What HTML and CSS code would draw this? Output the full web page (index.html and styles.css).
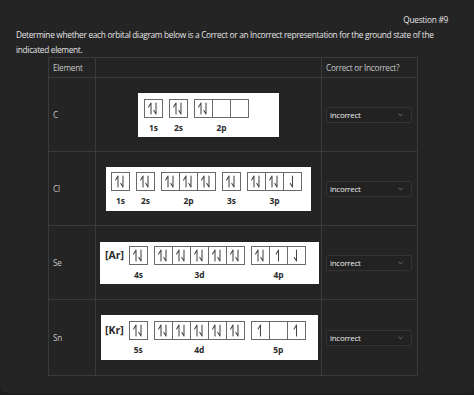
FILE: index.html
```html
<!DOCTYPE html>
<html lang="en">
<head>
<meta charset="utf-8">
<title>Question #9</title>
<link rel="stylesheet" href="styles.css">
</head>
<body>
<svg class="defs" width="0" height="0" aria-hidden="true">
  <defs>
    <symbol id="ud" viewBox="0 0 17 17"><path d="M6 14V3M6 3L3.6 7M11 3V14M11 14L8.8 10.4"/></symbol>
    <symbol id="u" viewBox="0 0 17 17"><path d="M8.5 14V3M8.5 3L6.1 7"/></symbol>
    <symbol id="d" viewBox="0 0 17 17"><path d="M8.5 3V14M8.5 14L6.3 10.4"/></symbol>
  </defs>
</svg>
<div class="page">
  <div class="qnum">Question #9</div>
  <p class="prompt">Determine whether each orbital diagram below is a Correct or an Incorrect representation for the ground state of the indicated element.</p>
  <table class="grid">
    <thead>
      <tr><th class="c-el">Element</th><th class="c-dg"></th><th class="c-ans">Correct or Incorrect?</th></tr>
    </thead>
    <tbody>
      <tr>
        <td class="c-el">C</td>
        <td class="c-dg">
          <div class="diagram d-c">
            <div class="grp"><div class="boxes"><span class="bx"><svg><use href="#ud"/></svg></span></div><div class="lbl">1s</div></div>
            <div class="grp"><div class="boxes"><span class="bx"><svg><use href="#ud"/></svg></span></div><div class="lbl">2s</div></div>
            <div class="grp"><div class="boxes"><span class="bx"><svg><use href="#ud"/></svg></span><span class="bx"></span><span class="bx"></span></div><div class="lbl">2p</div></div>
          </div>
        </td>
        <td class="c-ans"><div class="select"><span>incorrect</span><svg class="chev" viewBox="0 0 6 4"><path d="M0.5 0.5L3 3L5.5 0.5"/></svg></div></td>
      </tr>
      <tr>
        <td class="c-el">Cl</td>
        <td class="c-dg">
          <div class="diagram d-cl">
            <div class="grp"><div class="boxes"><span class="bx"><svg><use href="#ud"/></svg></span></div><div class="lbl">1s</div></div>
            <div class="grp"><div class="boxes"><span class="bx"><svg><use href="#ud"/></svg></span></div><div class="lbl">2s</div></div>
            <div class="grp"><div class="boxes"><span class="bx"><svg><use href="#ud"/></svg></span><span class="bx"><svg><use href="#ud"/></svg></span><span class="bx"><svg><use href="#ud"/></svg></span></div><div class="lbl">2p</div></div>
            <div class="grp"><div class="boxes"><span class="bx"><svg><use href="#ud"/></svg></span></div><div class="lbl">3s</div></div>
            <div class="grp"><div class="boxes"><span class="bx"><svg><use href="#ud"/></svg></span><span class="bx"><svg><use href="#ud"/></svg></span><span class="bx"><svg><use href="#d"/></svg></span></div><div class="lbl">3p</div></div>
          </div>
        </td>
        <td class="c-ans"><div class="select"><span>incorrect</span><svg class="chev" viewBox="0 0 6 4"><path d="M0.5 0.5L3 3L5.5 0.5"/></svg></div></td>
      </tr>
      <tr>
        <td class="c-el">Se</td>
        <td class="c-dg">
          <div class="diagram d-se">
            <div class="core">[Ar]</div>
            <div class="grp"><div class="boxes"><span class="bx"><svg><use href="#ud"/></svg></span></div><div class="lbl">4s</div></div>
            <div class="grp"><div class="boxes"><span class="bx"><svg><use href="#ud"/></svg></span><span class="bx"><svg><use href="#ud"/></svg></span><span class="bx"><svg><use href="#ud"/></svg></span><span class="bx"><svg><use href="#ud"/></svg></span><span class="bx"><svg><use href="#ud"/></svg></span></div><div class="lbl">3d</div></div>
            <div class="grp"><div class="boxes"><span class="bx"><svg><use href="#ud"/></svg></span><span class="bx"><svg><use href="#u"/></svg></span><span class="bx"><svg><use href="#d"/></svg></span></div><div class="lbl">4p</div></div>
          </div>
        </td>
        <td class="c-ans"><div class="select"><span>incorrect</span><svg class="chev" viewBox="0 0 6 4"><path d="M0.5 0.5L3 3L5.5 0.5"/></svg></div></td>
      </tr>
      <tr class="last">
        <td class="c-el">Sn</td>
        <td class="c-dg">
          <div class="diagram d-sn">
            <div class="core">[Kr]</div>
            <div class="grp"><div class="boxes"><span class="bx"><svg><use href="#ud"/></svg></span></div><div class="lbl">5s</div></div>
            <div class="grp"><div class="boxes"><span class="bx"><svg><use href="#ud"/></svg></span><span class="bx"><svg><use href="#ud"/></svg></span><span class="bx"><svg><use href="#ud"/></svg></span><span class="bx"><svg><use href="#ud"/></svg></span><span class="bx"><svg><use href="#ud"/></svg></span></div><div class="lbl">4d</div></div>
            <div class="grp"><div class="boxes"><span class="bx"><svg><use href="#u"/></svg></span><span class="bx"></span><span class="bx"><svg><use href="#u"/></svg></span></div><div class="lbl">5p</div></div>
          </div>
        </td>
        <td class="c-ans"><div class="select"><span>incorrect</span><svg class="chev" viewBox="0 0 6 4"><path d="M0.5 0.5L3 3L5.5 0.5"/></svg></div></td>
      </tr>
    </tbody>
  </table>
</div>
</body>
</html>
```

FILE: styles.css
```css
html, body {
  margin: 0;
  padding: 0;
  background: #1d1d1d;
}

.defs {
  position: absolute;
  width: 0;
  height: 0;
  overflow: hidden;
}

.page {
  background: #242424;
  height: 393px;
  border-radius: 0 0 6px 6px;
  box-sizing: border-box;
  padding-top: 13px;
  font-family: "Open Sans", "DejaVu Sans", sans-serif;
  color: #e4e4e4;
}

.qnum {
  font-size: 8.3px;
  letter-spacing: -0.25px;
  line-height: 14px;
  text-align: right;
  padding-right: 26px;
}

.prompt {
  margin: 0;
  padding: 0 24px 0 16px;
  font-size: 8.3px;
  letter-spacing: -0.3px;
  line-height: 15px;
}

.grid {
  margin-left: 48px;
  width: 370px;
  border-collapse: collapse;
  table-layout: fixed;
}

.grid th,
.grid td {
  border: 1px solid #3a3a3a;
  padding: 0 0 0 4px;
  font-weight: normal;
  text-align: left;
  vertical-align: middle;
}

.grid th {
  height: 19px;
  font-size: 8.2px;
  letter-spacing: -0.25px;
  color: #c4c4c4;
}

.grid td {
  height: 73px;
  font-size: 8.2px;
  letter-spacing: -0.2px;
  color: #c4c4c4;
}

.grid tr.last td {
  height: 75px;
}

.c-el { width: 42px; }
.c-ans { width: 91px; }

.grid td.c-dg {
  padding: 0;
  letter-spacing: 0;
}

.diagram {
  margin: 0 auto;
  background: #ffffff;
  display: flex;
  align-items: flex-start;
  gap: 6px;
  box-sizing: border-box;
  padding: 5px 0 4px 5px;
}

.d-c { width: 141px; padding-left: 6px; padding-top: 6px; padding-bottom: 3px; }
.d-cl { width: 205px; }
.d-se { width: 219px; padding-top: 4px; padding-bottom: 3px; margin-left: 4px; gap: 5px; }
.d-sn { width: 217px; padding-left: 4px; padding-top: 6px; margin-left: 5px; gap: 5px; }

.d-se .grp + .grp,
.d-sn .grp + .grp {
  margin-left: 1px;
}

.grp {
  display: flex;
  flex-direction: column;
  align-items: center;
}

.boxes {
  display: flex;
  border: 1px solid #6a6a6a;
  height: 17px;
}

.bx {
  width: 17px;
  height: 17px;
  display: block;
}

.bx + .bx {
  border-left: 1px solid #6a6a6a;
}

.bx svg {
  width: 17px;
  height: 17px;
  display: block;
  fill: none;
  stroke: #444444;
  stroke-width: 1.05;
  stroke-linecap: round;
}

.lbl {
  margin-top: 4px;
  font-size: 8.4px;
  line-height: 12px;
  font-weight: 700;
  color: #2a2a2a;
}

.core {
  font-size: 10.5px;
  font-weight: 700;
  line-height: 19px;
  color: #2a2a2a;
}

.select {
  width: 86px;
  height: 16px;
  box-sizing: border-box;
  border: 1px solid #333333;
  border-radius: 2px;
  background: #222222;
  display: flex;
  align-items: center;
  justify-content: space-between;
  padding: 0 8px 0 3px;
  font-size: 7.8px;
  letter-spacing: -0.2px;
  color: #f0f0f0;
}

.chev {
  width: 5px;
  height: 4px;
  fill: none;
  stroke: #8a8a8a;
  stroke-width: 0.9;
}
```
